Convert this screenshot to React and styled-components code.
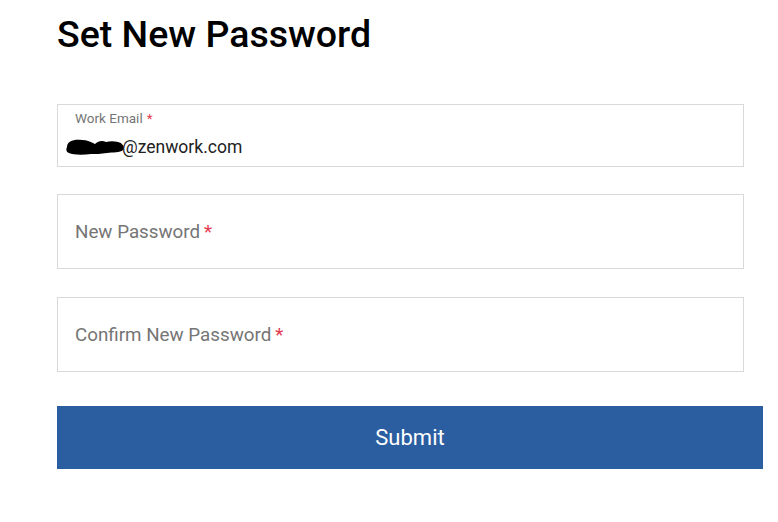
import React from 'react';
import styled, { createGlobalStyle } from 'styled-components';

const GlobalStyle = createGlobalStyle`
  html, body {
    margin: 0;
    padding: 0;
    background: #ffffff;
  }
  body {
    font-family: Roboto, "Liberation Sans", Arial, sans-serif;
  }
`;

const Page = styled.main`
  padding: 13px 16px 40px 57px;
`;

const Title = styled.h1`
  margin: 0 0 48px 0;
  font-size: 37.5px;
  font-weight: 500;
  line-height: 43px;
  color: #000;
`;

const Form = styled.form`
  display: flex;
  flex-direction: column;
`;

const Box = styled.div`
  box-sizing: border-box;
  width: 687px;
  height: ${p => (p.$filled ? '63px' : '75px')};
  margin-bottom: ${p => (p.$filled ? '27px' : '28px')};
  border: 1px solid #d9d9d9;
  background: #fff;
  display: flex;
  flex-direction: column;
  justify-content: ${p => (p.$filled ? 'flex-start' : 'center')};
  padding: ${p => (p.$filled ? '5px 0 0 0' : '0')};
`;

const SmallLabel = styled.label`
  padding-left: 17px;
  font-size: 13.5px;
  line-height: 17px;
  color: #757575;
`;

const Placeholder = styled.span`
  padding-left: 17px;
  font-size: 18.8px;
  line-height: 22px;
  color: #757575;
`;

const Star = styled.span`
  color: #e53950;
  margin-left: 4px;
`;

const Value = styled.div`
  position: relative;
  padding-left: 9px;
  margin-top: 9px;
  font-size: 17.5px;
  line-height: 22px;
  color: #222;
`;

const Hidden = styled.span`
  display: inline-block;
  width: 55px;
`;

const Scribble = styled.svg`
  position: absolute;
  left: 7px;
  top: 1px;
`;

const SubmitButton = styled.button`
  margin-top: 6px;
  width: 706px;
  height: 63px;
  border: none;
  background: #2b5ea0;
  color: #fff;
  font-family: Roboto, "Liberation Sans", Arial, sans-serif;
  font-size: 22px;
  cursor: pointer;
`;

function Field({ label, filled }) {
  if (filled) {
    return (
      <Box $filled>
        <SmallLabel>
          {label}
          <Star>*</Star>
        </SmallLabel>
        <Value>
          <Hidden />@zenwork.com
          <Scribble width="60" height="20" viewBox="0 0 60 20">
            <path
              d="M2 10 C2 4 9 2 17 3 C22 3 26 5 30 7 C33 4 37 3 41 5 C45 4 49 4 53 5 C57 6 60 9 58 13 C55 16 48 15 42 16 C36 17 30 17 26 17 C18 18 8 18 4 16 C1 15 1 12 2 10 Z"
              fill="#000"
            />
          </Scribble>
        </Value>
      </Box>
    );
  }
  return (
    <Box>
      <Placeholder>
        {label}
        <Star>*</Star>
      </Placeholder>
    </Box>
  );
}

export default function App() {
  return (
    <>
      <GlobalStyle />
      <Page>
        <Title>Set New Password</Title>
        <Form onSubmit={e => e.preventDefault()}>
          <Field label="Work Email" filled />
          <Field label="New Password" />
          <Field label="Confirm New Password" />
          <SubmitButton type="submit">Submit</SubmitButton>
        </Form>
      </Page>
    </>
  );
}
